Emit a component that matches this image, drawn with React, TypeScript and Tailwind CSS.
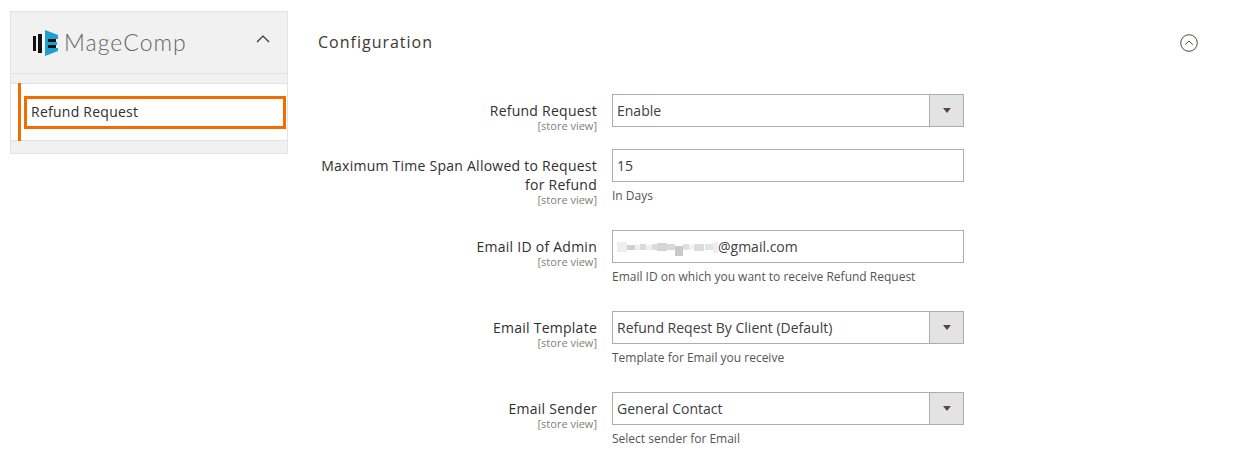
const font = { fontFamily: '"Open Sans", sans-serif' };

function Arrow() {
  return (
    <div className="flex w-[34px] shrink-0 items-center justify-center border-l border-[#adadad] bg-[#e3e3e3]">
      <svg width="8" height="5" viewBox="0 0 8 5"><path d="M0 0h8L4 5z" fill="#514943" /></svg>
    </div>
  );
}

function Select({ value }: { value: string }) {
  return (
    <div className="flex h-[33px] w-[352px] border border-[#adadad] bg-white">
      <div className="flex-1 pl-[4px] text-[14px] leading-[31px] text-[#404040]">{value}</div>
      <Arrow />
    </div>
  );
}

function Input({ children }: { children: React.ReactNode }) {
  return (
    <div className="flex h-[33px] w-[352px] items-center border border-[#adadad] bg-white pl-[4px] text-[14px] text-[#404040]">
      {children}
    </div>
  );
}

function Row({ label, note, control, className }: { label: React.ReactNode; note?: string; control: React.ReactNode; className: string }) {
  return (
    <div className={`flex ${className}`}>
      <div className="w-[279px] shrink-0 pt-[7px] text-right">
        <div className="text-[14px] font-medium leading-[19px] tracking-[0.25px] text-[#303030]">{label}</div>
        <div className="text-[11px] leading-[12px] text-[#808080]">[store view]</div>
      </div>
      <div className="ml-[15px]">
        {control}
        {note && <div className="mt-[6px] text-[12px] leading-[15px] text-[#555555]">{note}</div>}
      </div>
    </div>
  );
}

const blur: [number, number, number, number, string][] = [
  [0, 5, 10, 10, '#eeeeee'], [10, 8, 8, 5, '#d0d0d0'], [18, 8, 5, 5, '#eeeeee'], [23, 7, 6, 6, '#dadada'],
  [29, 8, 6, 5, '#eeeeee'], [35, 7, 5, 6, '#dddddd'], [40, 6, 10, 8, '#d5d5d5'], [50, 7, 8, 6, '#d8d8d8'],
  [58, 9, 8, 10, '#c9c9c9'], [66, 7, 6, 6, '#e0e0e0'], [72, 8, 4, 5, '#f0f0f0'], [77, 7, 10, 7, '#dcdcdc'],
  [88, 7, 8, 6, '#e4e4e4'], [96, 5, 5, 11, '#efefef'],
];

export default function App() {
  return (
    <div className="flex h-[452px] w-[1238px] overflow-hidden bg-white" style={font}>
      <aside className="ml-[10px] mt-[11px] h-[143px] w-[278px] shrink-0 border border-[#e3e3e3] bg-[#f1f1f1]">
        <div className="flex h-[62px] items-center border-b border-[#e3e3e3]">
          <svg className="ml-[22px] mt-[1px]" width="25" height="26" viewBox="0 0 25 26">
            <rect x="0" y="6" width="3" height="15" fill="#111" />
            <rect x="5" y="4" width="4" height="19" fill="#111" />
            <path d="M9 3l3-2v24l-3-2z" fill="#fff" />
            <path d="M12 0l13 5v4h-8v3h7v3h-7v3h8v3L12 26z" fill="#1d9fd0" />
            <path d="M15 9h8v3h-8zM15 15h8v3h-8z" fill="#111" />
          </svg>
          <span className="ml-[6px] text-[23px] font-light leading-none tracking-[1.05px] text-[#666666]" style={{ fontFamily: 'Lato, sans-serif' }}>MageComp</span>
          <svg className="ml-[69px] mt-[-8px]" width="14" height="9" viewBox="0 0 14 9"><path d="M1 8L7 2l6 6" fill="none" stroke="#303030" strokeWidth="1.2" /></svg>
        </div>
        <div className="mt-[9px] h-[58px] border-y border-[#e3e3e3] bg-white">
          <div className="-my-px ml-[7px] h-[58px] border-l-[3px] border-[#f26c00] pl-[3px] pt-[13px]">
            <div className="h-[33px] w-[262px] border-[3px] border-[#f26c00] bg-white pl-[4px] text-[14px] font-medium leading-[26px] tracking-[0.25px] text-[#303030]">Refund Request</div>
          </div>
        </div>
      </aside>
      <main className="ml-[30px] flex-1">
        <div className="mt-[32px] flex h-[20px] items-center justify-between pr-[40px]">
          <h2 className="text-[16px] font-medium leading-[20px] tracking-[1px] text-[#41362f]">Configuration</h2>
          <svg className="mt-[2px]" width="18" height="18" viewBox="0 0 18 18"><circle cx="9" cy="9" r="8.3" fill="none" stroke="#514943" strokeWidth="1" /><path d="M5.2 10.6L9 7l3.8 3.6" fill="none" stroke="#514943" strokeWidth="1" /></svg>
        </div>
        <div>
          <Row className="mt-[42px]" label="Refund Request" control={<Select value="Enable" />} />
          <Row className="mt-[17px]" label="Maximum Time Span Allowed to Request for Refund" note="In Days" control={<Input>15</Input>} />
          <Row className="mt-[24px]" label="Email ID of Admin" note="Email ID on which you want to receive Refund Request" control={
            <Input>
              <svg width="101" height="20" viewBox="0 0 101 20">
                {blur.map(([x, y, w, h, c], i) => <rect key={i} x={x} y={y} width={w} height={h} fill={c} />)}
              </svg>
              <span>@gmail.com</span>
            </Input>
          } />
          <Row className="mt-[27px]" label="Email Template" note="Template for Email you receive" control={<Select value="Refund Reqest By Client (Default)" />} />
          <Row className="mt-[27px]" label="Email Sender" note="Select sender for Email" control={<Select value="General Contact" />} />
        </div>
      </main>
    </div>
  );
}
